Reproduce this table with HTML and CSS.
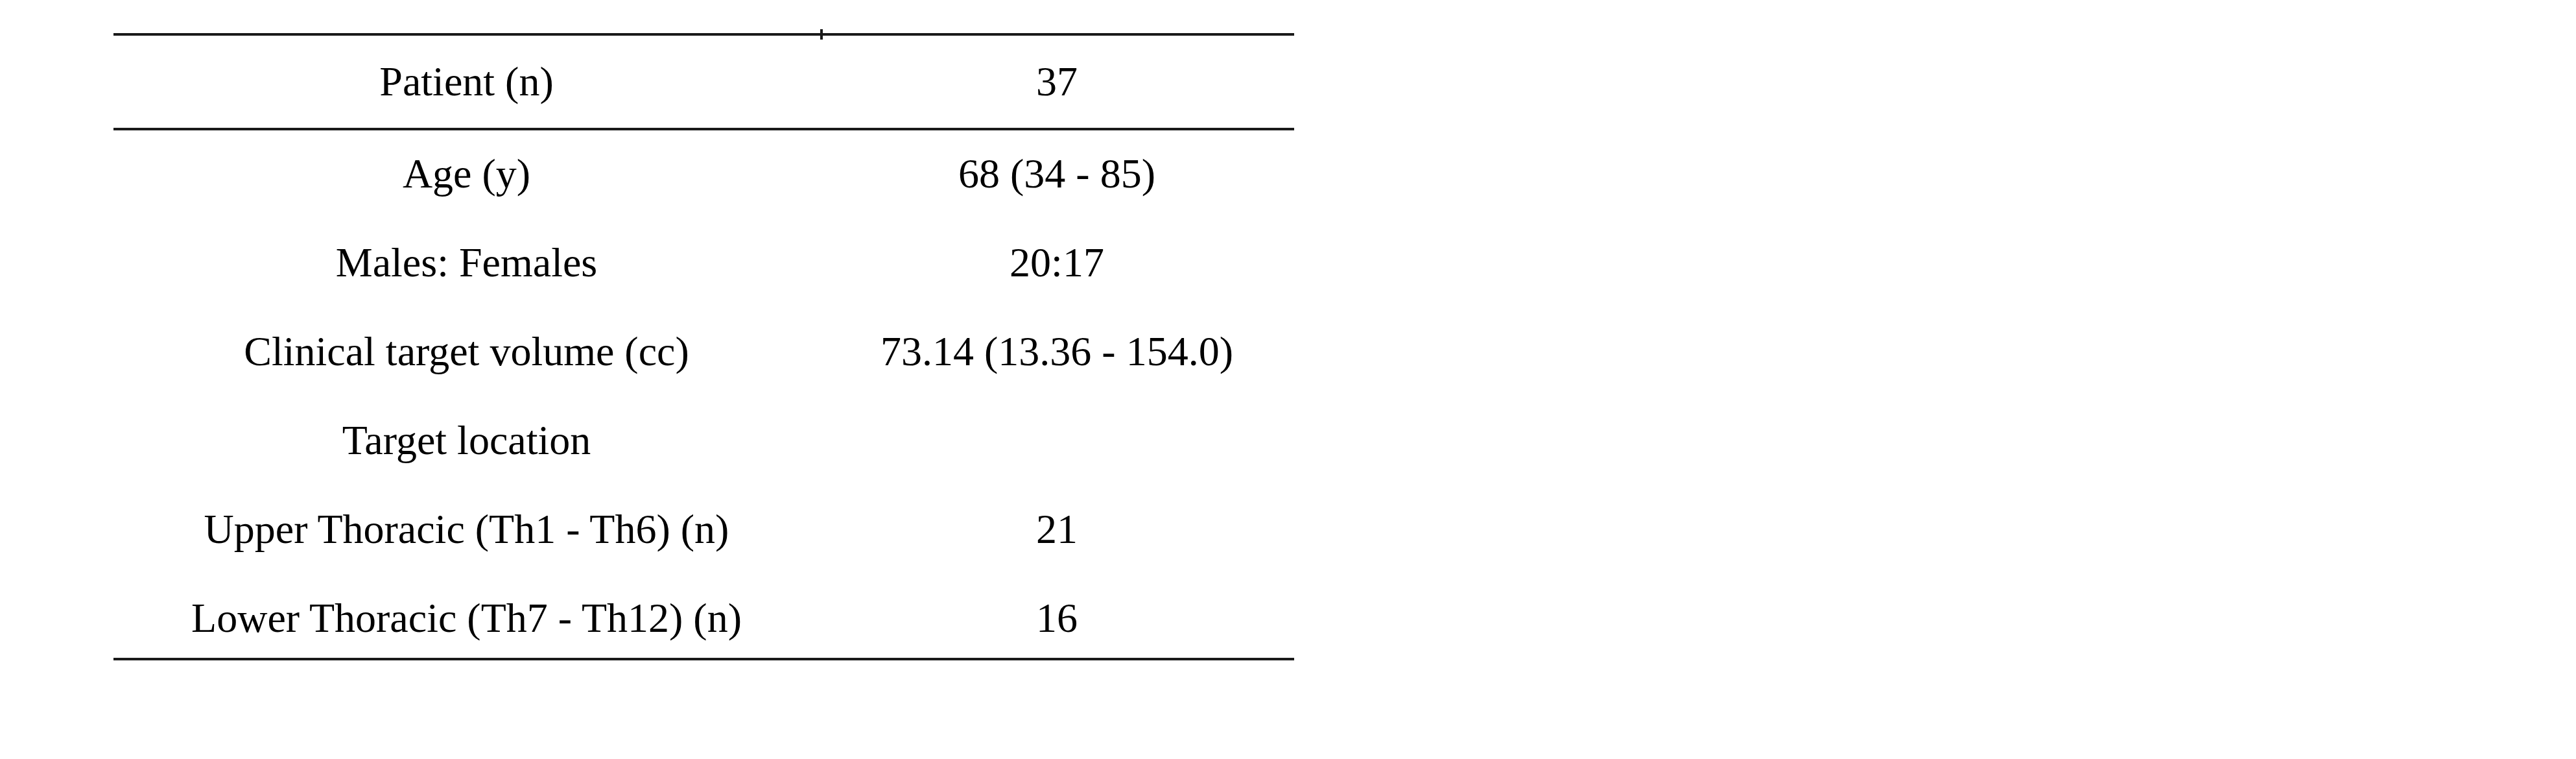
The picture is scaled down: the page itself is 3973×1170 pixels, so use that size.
FILE: index.html
```html
<!DOCTYPE html>
<html lang="en">
<head>
<meta charset="utf-8">
<title>Patient characteristics</title>
<link rel="stylesheet" href="styles.css">
</head>
<body>
<div class="table">
  <div class="row head">
    <div class="cell">Patient (n)</div>
    <div class="cell">37</div>
  </div>
  <div class="body">
    <div class="row"><div class="cell">Age (y)</div><div class="cell">68 (34 - 85)</div></div>
    <div class="row"><div class="cell">Males: Females</div><div class="cell">20:17</div></div>
    <div class="row"><div class="cell">Clinical target volume (cc)</div><div class="cell">73.14 (13.36 - 154.0)</div></div>
    <div class="row"><div class="cell">Target location</div><div class="cell"></div></div>
    <div class="row"><div class="cell">Upper Thoracic (Th1 - Th6) (n)</div><div class="cell">21</div></div>
    <div class="row"><div class="cell">Lower Thoracic (Th7 - Th12) (n)</div><div class="cell">16</div></div>
  </div>
</div>
</body>
</html>
```
FILE: styles.css
```css
html, body {
  margin: 0;
  padding: 0;
  background: #fff;
}

body {
  font-family: "Liberation Serif", "Times New Roman", serif;
  font-size: 64px;
  color: #000;
}

.table {
  position: relative;
  margin: 51px 0 0 175px;
  width: 1821px;
  border-top: 4px solid #1a1a1a;
  border-bottom: 4px solid #1a1a1a;
}

.table::before {
  content: "";
  position: absolute;
  left: 1090px;
  top: -10px;
  width: 4px;
  height: 16px;
  background: #1a1a1a;
}

.table::after {
  content: "";
  position: absolute;
  left: 1084px;
  bottom: -10px;
  width: 4px;
  height: 10px;
  background: #1a1a1a;
}

.row {
  display: grid;
  grid-template-columns: 1089px 732px;
  align-items: start;
  padding: 30px 0 33px;
}

.row:last-child {
  padding-bottom: 24px;
}

.row.head {
  height: 142px;
  padding: 0;
  align-items: center;
  border-bottom: 4px solid #1a1a1a;
}

.cell {
  text-align: center;
  line-height: 74px;
  height: 74px;
  white-space: nowrap;
}
```
